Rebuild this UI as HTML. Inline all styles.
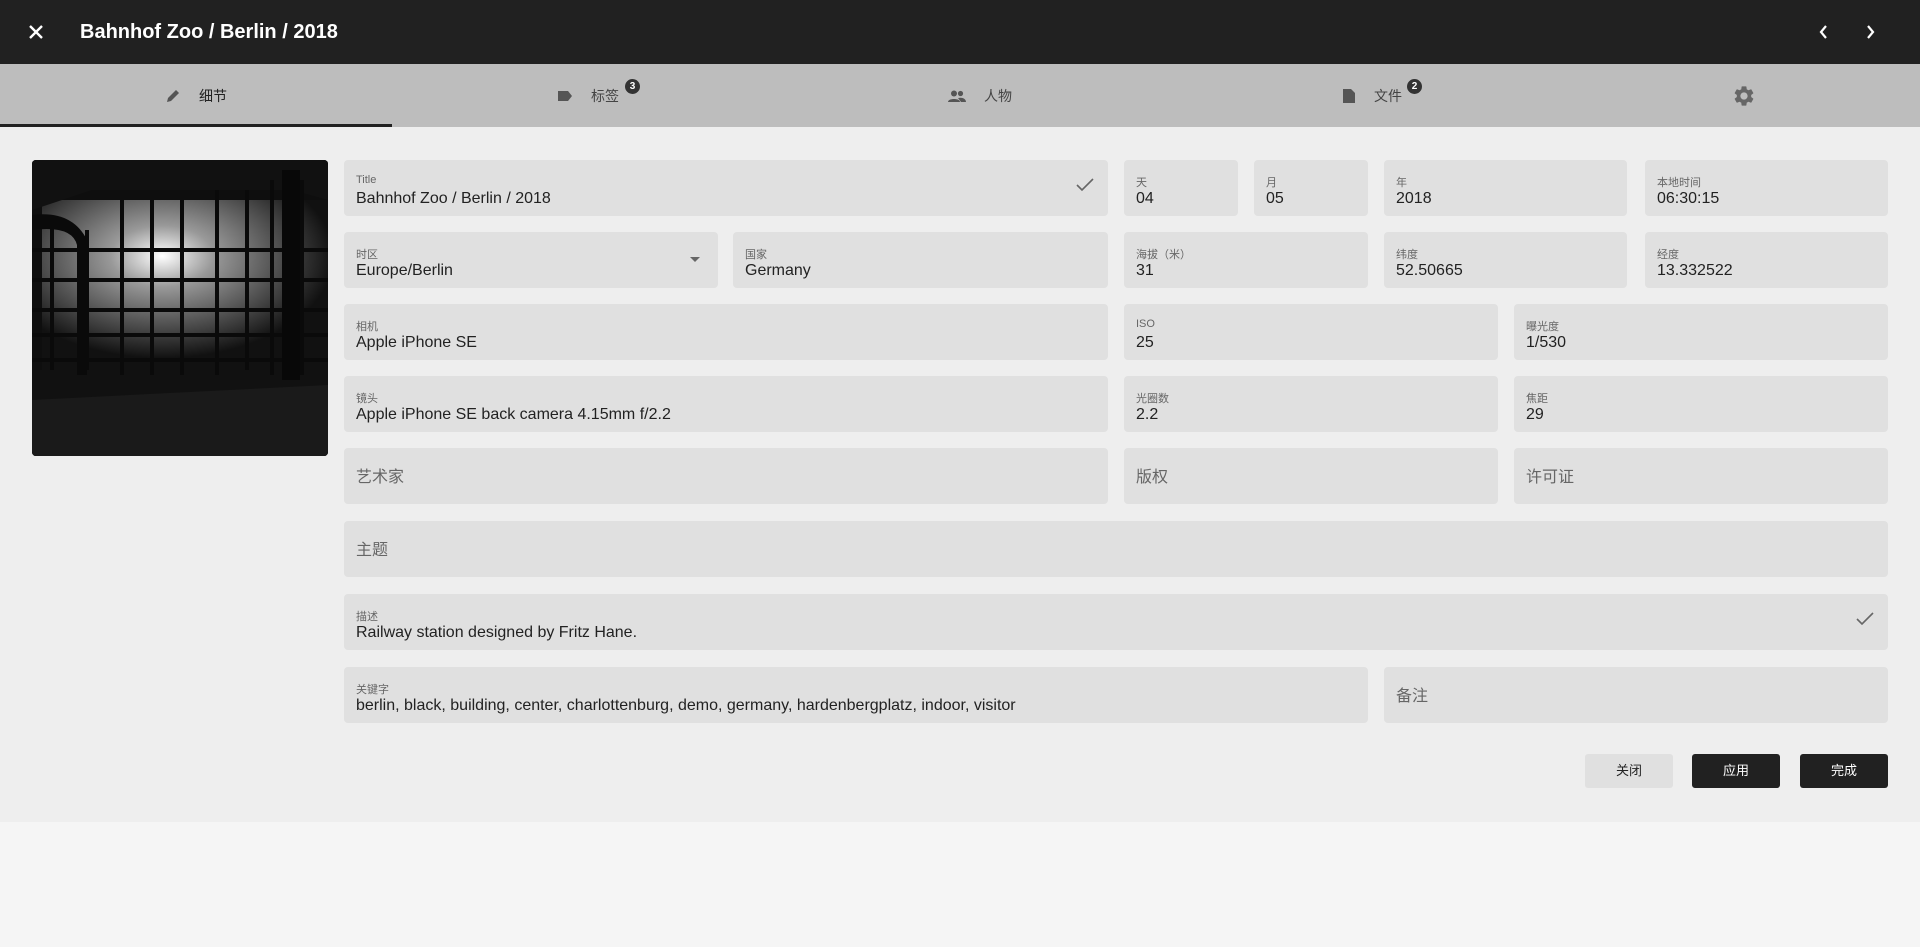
<!DOCTYPE html>
<html><head><meta charset="utf-8"><style>
*{box-sizing:border-box;margin:0;padding:0}
body{width:1920px;height:947px;background:#f5f5f5;font-family:"Liberation Sans","Noto Sans CJK SC",sans-serif;position:relative;overflow:hidden}
.hdr{position:absolute;left:0;top:0;width:1920px;height:64px;background:#212121;color:#fff}
.hdr .t{position:absolute;left:80px;top:21px;font-size:20px;font-weight:bold}
.tabs{position:absolute;left:0;top:64px;width:1920px;height:63px;background:#bdbdbd}
.tab{position:absolute;top:0;height:63px;display:flex;align-items:center;justify-content:center;font-size:14px;color:#444}
.tab svg{margin-right:18px}
.badge{position:absolute;width:15px;height:15px;border-radius:50%;background:#333;color:#fff;font-size:10px;font-weight:bold;text-align:center;line-height:15px}
.ul{position:absolute;left:0;width:392px;height:3px;background:#212121}
.main{position:absolute;left:0;top:127px;width:1920px;height:695px;background:#eeeeee}
.photo{position:absolute;left:32px;top:160px;width:296px;height:296px;border-radius:4px;overflow:hidden;background:#111}
.f{position:absolute;background:#e0e0e0;border-radius:4px;height:56px}
.f .l{position:absolute;left:12px;top:14px;font-size:11px;color:#666}
.f .v{position:absolute;left:12px;top:30px;font-size:16px;color:#222}
.f .p{position:absolute;left:12px;top:15px;font-size:16px;color:#666}
.chk{position:absolute;right:14px;top:18px}
.btn{position:absolute;top:754px;height:34px;width:88px;border-radius:3px;font-size:13px;text-align:center;line-height:34px}
</style></head><body>
<div class="hdr">
<svg style="position:absolute;left:28px;top:24px" width="16" height="16" viewBox="0 0 16 16"><path d="M2 2L14 14M14 2L2 14" stroke="#fff" stroke-width="2.4"/></svg>
<div class="t">Bahnhof Zoo / Berlin / 2018</div>
<svg style="position:absolute;left:1818px;top:24px" width="10" height="16" viewBox="0 0 10 16"><path d="M8 2L3 8L8 14" stroke="#fff" stroke-width="2.2" fill="none"/></svg>
<svg style="position:absolute;left:1866px;top:24px" width="10" height="16" viewBox="0 0 10 16"><path d="M2 2L7 8L2 14" stroke="#fff" stroke-width="2.2" fill="none"/></svg>
</div>
<div class="tabs">
<div class="tab" style="left:0;width:392px;color:#222"><svg width="16" height="16" viewBox="0 0 16 16"><path d="M2 14L3 10L11 2L14 5L6 13Z" fill="#555"/></svg>细节</div>
<div class="tab" style="left:392px;width:392px"><svg width="16" height="12" viewBox="0 0 16 12"><path d="M1 1H11L15 6L11 11H1Z" fill="#555"/></svg>标签<div class="badge" style="left:233px;top:15px">3</div></div>
<div class="tab" style="left:784px;width:392px"><svg width="18" height="12" viewBox="0 0 18 12"><circle cx="6" cy="3.5" r="3" fill="#555"/><circle cx="12.5" cy="3.5" r="2.6" fill="#555"/><path d="M0 12C0 8 12 8 12 12Z M10 8C14 7 18 8.5 18 12H13Z" fill="#555"/></svg>人物</div>
<div class="tab" style="left:1176px;width:392px"><svg width="14" height="16" viewBox="0 0 14 16"><path d="M1 1H9L13 5V15H1Z" fill="#555"/></svg>文件<div class="badge" style="left:231px;top:15px">2</div></div>
<div class="tab" style="left:1568px;width:352px"><svg style="margin:0" width="24" height="24" viewBox="0 0 24 24"><path fill="#666" d="M19.14,12.94c0.04-0.3,0.06-0.61,0.06-0.94c0-0.32-0.02-0.64-0.07-0.94l2.03-1.58c0.18-0.14,0.23-0.41,0.12-0.61l-1.92-3.32c-0.12-0.22-0.37-0.29-0.59-0.22l-2.39,0.96c-0.5-0.38-1.03-0.7-1.62-0.94L14.4,2.81c-0.04-0.24-0.24-0.41-0.48-0.41h-3.84c-0.24,0-0.43,0.17-0.47,0.41L9.25,5.35C8.66,5.59,8.12,5.92,7.63,6.29L5.24,5.33c-0.22-0.08-0.47,0-0.59,0.22L2.74,8.87C2.62,9.08,2.66,9.34,2.86,9.48l2.03,1.58C4.84,11.36,4.8,11.69,4.8,12s0.02,0.64,0.07,0.94l-2.03,1.58c-0.18,0.14-0.23,0.41-0.12,0.61l1.92,3.32c0.12,0.22,0.37,0.29,0.59,0.22l2.39-0.96c0.5,0.38,1.03,0.7,1.62,0.94l0.36,2.54c0.05,0.24,0.24,0.41,0.48,0.41h3.84c0.24,0,0.44-0.17,0.47-0.41l0.36-2.54c0.59-0.24,1.13-0.56,1.62-0.94l2.39,0.96c0.22,0.08,0.47,0,0.59-0.22l1.92-3.32c0.12-0.22,0.07-0.47-0.12-0.61L19.14,12.94z M12,15.6c-1.98,0-3.6-1.62-3.6-3.6s1.62-3.6,3.6-3.6s3.6,1.62,3.6,3.6S13.98,15.6,12,15.6z"/></svg></div>
<div class="ul" style="top:60px"></div>
</div>
<div class="main"></div>
<div class="photo"><svg width="296" height="296" viewBox="0 0 296 296">
<defs><radialGradient id="g" cx="0.42" cy="0.33" r="0.6"><stop offset="0" stop-color="#fff"/><stop offset="0.3" stop-color="#999"/><stop offset="1" stop-color="#111"/></radialGradient></defs>
<rect width="296" height="296" fill="#0e0e0e"/>
<rect x="10" y="40" width="286" height="170" fill="url(#g)"/>
<path d="M0 0H296V40L260 30H60L0 50Z" fill="#111"/>
<path d="M0 210H296V296H0Z" fill="#111"/>
<path d="M0 240L296 225V296H0Z" fill="#1a1a1a"/>
<g stroke="#0a0a0a" stroke-width="4"><path d="M20 60V210M55 70V210M90 40V215M120 40V215M150 40V215M185 30V215M215 30V210M240 20V215M270 20V215"/><path d="M0 90H296M0 120H296M0 150H296M0 175H296M0 200H296"/></g>
<path d="M0 55Q40 50 55 80V215H45V85Q40 65 0 70Z" fill="#0a0a0a"/>
<rect x="250" y="10" width="18" height="210" fill="#080808"/>
</svg></div>

<div class="f" style="left:344px;top:160px;width:764px"><div class="l">Title</div><div class="v">Bahnhof Zoo / Berlin / 2018</div><svg class="chk" width="18" height="14" viewBox="0 0 18 14"><path d="M1 7L6 12L17 1" stroke="#666" stroke-width="1.6" fill="none"/></svg></div>
<div class="f" style="left:1124px;top:160px;width:114px"><div class="l">天</div><div class="v">04</div></div>
<div class="f" style="left:1254px;top:160px;width:114px"><div class="l">月</div><div class="v">05</div></div>
<div class="f" style="left:1384px;top:160px;width:243px"><div class="l">年</div><div class="v">2018</div></div>
<div class="f" style="left:1645px;top:160px;width:243px"><div class="l">本地时间</div><div class="v">06:30:15</div></div>

<div class="f" style="left:344px;top:232px;width:374px"><div class="l">时区</div><div class="v">Europe/Berlin</div><svg style="position:absolute;right:18px;top:25px" width="10" height="5"><path d="M0 0H10L5 5Z" fill="#666"/></svg></div>
<div class="f" style="left:733px;top:232px;width:375px"><div class="l">国家</div><div class="v">Germany</div></div>
<div class="f" style="left:1124px;top:232px;width:244px"><div class="l">海拔（米）</div><div class="v">31</div></div>
<div class="f" style="left:1384px;top:232px;width:243px"><div class="l">纬度</div><div class="v">52.50665</div></div>
<div class="f" style="left:1645px;top:232px;width:243px"><div class="l">经度</div><div class="v">13.332522</div></div>

<div class="f" style="left:344px;top:304px;width:764px"><div class="l">相机</div><div class="v">Apple iPhone SE</div></div>
<div class="f" style="left:1124px;top:304px;width:374px"><div class="l">ISO</div><div class="v">25</div></div>
<div class="f" style="left:1514px;top:304px;width:374px"><div class="l">曝光度</div><div class="v">1/530</div></div>

<div class="f" style="left:344px;top:376px;width:764px"><div class="l">镜头</div><div class="v">Apple iPhone SE back camera 4.15mm f/2.2</div></div>
<div class="f" style="left:1124px;top:376px;width:374px"><div class="l">光圈数</div><div class="v">2.2</div></div>
<div class="f" style="left:1514px;top:376px;width:374px"><div class="l">焦距</div><div class="v">29</div></div>

<div class="f" style="left:344px;top:448px;width:764px"><div class="p">艺术家</div></div>
<div class="f" style="left:1124px;top:448px;width:374px"><div class="p">版权</div></div>
<div class="f" style="left:1514px;top:448px;width:374px"><div class="p">许可证</div></div>

<div class="f" style="left:344px;top:521px;width:1544px"><div class="p">主题</div></div>

<div class="f" style="left:344px;top:594px;width:1544px"><div class="l">描述</div><div class="v">Railway station designed by Fritz Hane.</div><svg class="chk" width="18" height="14" viewBox="0 0 18 14"><path d="M1 7L6 12L17 1" stroke="#666" stroke-width="1.6" fill="none"/></svg></div>

<div class="f" style="left:344px;top:667px;width:1024px"><div class="l">关键字</div><div class="v">berlin, black, building, center, charlottenburg, demo, germany, hardenbergplatz, indoor, visitor</div></div>
<div class="f" style="left:1384px;top:667px;width:504px"><div class="p">备注</div></div>

<div class="btn" style="left:1585px;background:#e0e0e0;color:#222">关闭</div>
<div class="btn" style="left:1692px;background:#212121;color:#fff">应用</div>
<div class="btn" style="left:1800px;background:#212121;color:#fff">完成</div>
</body></html>
